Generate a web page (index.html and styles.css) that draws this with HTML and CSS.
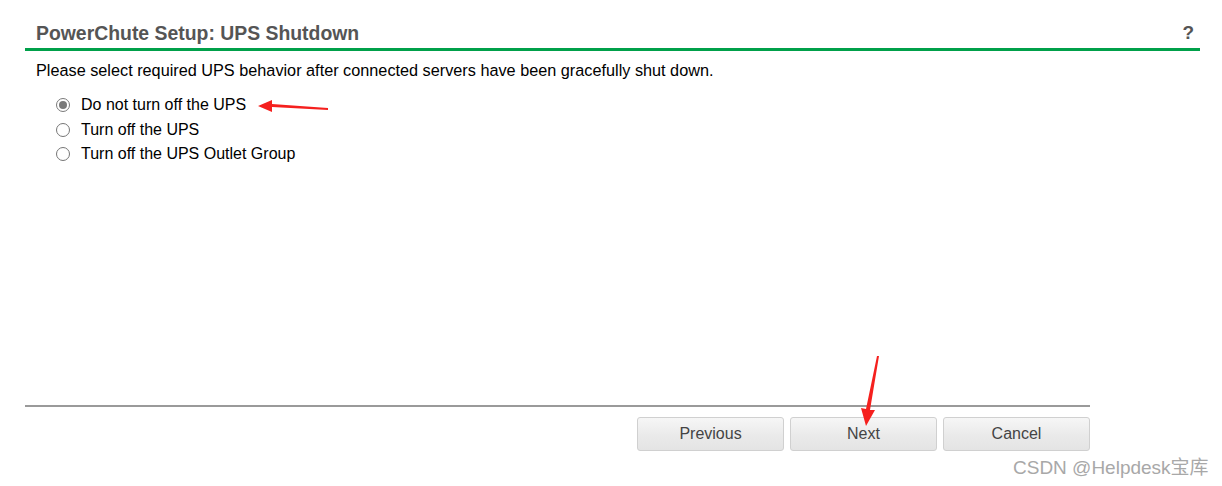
FILE: index.html
```html
<!DOCTYPE html>
<html>
<head>
<meta charset="utf-8">
<link rel="stylesheet" href="styles.css">
</head>
<body>
<div class="page">
  <div class="header">
    <h1 class="title">PowerChute Setup: UPS Shutdown</h1>
    <span class="help">?</span>
  </div>
  <div class="content">
    <p class="desc">Please select required UPS behavior after connected servers have been gracefully shut down.</p>
    <div class="options">
      <label class="opt"><span class="radio checked"></span>Do not turn off the UPS</label>
      <label class="opt"><span class="radio"></span>Turn off the UPS</label>
      <label class="opt"><span class="radio"></span>Turn off the UPS Outlet Group</label>
    </div>
  </div>
  <div class="footer">
    <div class="buttons">
      <button class="btn">Previous</button>
      <button class="btn">Next</button>
      <button class="btn">Cancel</button>
    </div>
  </div>
</div>
<svg class="arrows" width="1222" height="486" viewBox="0 0 1222 486">
  <polygon fill="#f5201e" points="328,110 272,107 272,112 258,106 272,100 272,104 328,108"/>
  <polygon fill="#f5201e" points="879,356 870,410 875,410 866,426 861,408 866,409 877,356"/>
</svg>
<div class="watermark">CSDN @Helpdesk宝库</div>
</body>
</html>
```
FILE: styles.css
```css
html, body {
  margin: 0;
  padding: 0;
  background: #fff;
}
body {
  font-family: "Liberation Sans", Arial, sans-serif;
  width: 1222px;
  height: 486px;
  position: relative;
  overflow: hidden;
}
.page {
  padding: 0 22px 0 25px;
}
.header {
  display: flex;
  justify-content: space-between;
  align-items: flex-end;
  height: 48px;
  border-bottom: 3px solid #00a04a;
}
.title {
  margin: 0 0 4px 11px;
  font-size: 19.4px;
  font-weight: bold;
  color: #555;
  line-height: 22px;
}
.help {
  font-size: 19px;
  font-weight: bold;
  color: #555;
  margin: 0 6px 4px 0;
  line-height: 22px;
}
.content {
  height: 354px;
  box-sizing: border-box;
  padding: 10px 0 0 11px;
}
.desc {
  margin: 0;
  font-size: 16.25px;
  line-height: 18px;
  color: #000;
}
.options {
  display: flex;
  flex-direction: column;
  margin-top: 14px;
  padding-left: 20px;
}
.opt {
  display: flex;
  align-items: center;
  font-size: 16px;
  line-height: 18px;
  height: 24.5px;
  color: #000;
}
.radio {
  width: 14px;
  height: 14px;
  border: 1px solid #767676;
  border-radius: 50%;
  box-sizing: border-box;
  margin-right: 11px;
  position: relative;
  background: #fff;
  flex: none;
}
.radio.checked::after {
  content: "";
  position: absolute;
  left: 2px;
  top: 2px;
  width: 8px;
  height: 8px;
  border-radius: 50%;
  background: #7a7a7a;
}
.radio.checked {
  border-color: #7a7a7a;
}
.footer {
  width: 1065px;
  border-top: 2px solid #9a9a9a;
  padding-top: 10px;
}
.buttons {
  display: flex;
  justify-content: flex-end;
  gap: 6px;
}
.btn {
  width: 147px;
  height: 34px;
  border: 1px solid #d0d0d0;
  border-radius: 3px;
  background: linear-gradient(#f6f6f6, #eaeaea 55%, #e4e4e4);
  font-family: "Liberation Sans", Arial, sans-serif;
  font-size: 16px;
  color: #444;
  padding: 0;
}
.arrows {
  position: absolute;
  left: 0;
  top: 0;
  pointer-events: none;
}
.watermark {
  position: absolute;
  left: 1013px;
  top: 452px;
  font-family: "Liberation Sans", "Noto Sans CJK SC", sans-serif;
  font-size: 19px;
  color: #a8a8a8;
}
```
